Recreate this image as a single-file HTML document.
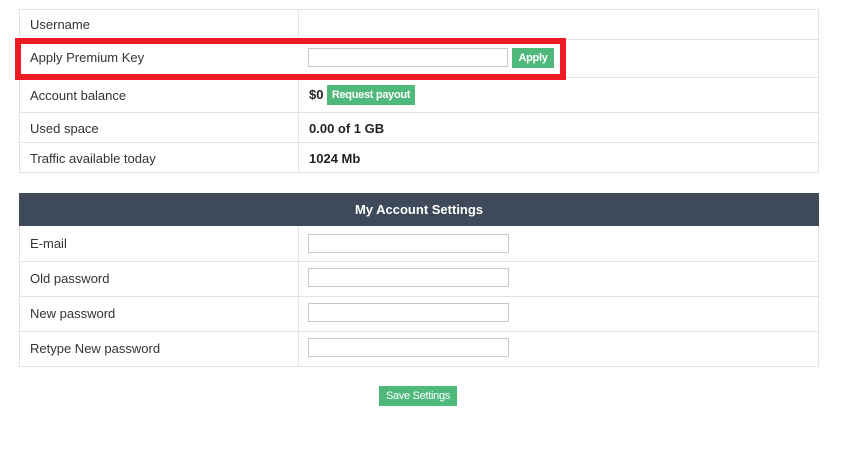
<!DOCTYPE html>
<html><head><style>
body{margin:0;width:853px;height:470px;background:#fff;font-family:"Liberation Sans",Arial,sans-serif;font-size:13px;color:#333;position:relative;overflow:hidden}
.a{position:absolute}
.h{background:#e3e3e3;height:1px}
.v{background:#e3e3e3;width:1px}
.t{position:absolute;left:30px}
.in{position:absolute;left:308px;width:199px;height:17px;border:1px solid #c8c8c8;background:#fff}
.btn{position:absolute;background:#4fb97c;color:#fff;font-size:11px;font-weight:bold;text-align:center;letter-spacing:-0.3px}
b{font-weight:bold;color:#222}
</style></head><body>
<!-- table 1 -->
<div class="a h" style="left:19px;top:9px;width:800px"></div>
<div class="a h" style="left:19px;top:39px;width:800px"></div>
<div class="a h" style="left:19px;top:77px;width:800px"></div>
<div class="a h" style="left:19px;top:112px;width:800px"></div>
<div class="a h" style="left:19px;top:142px;width:800px"></div>
<div class="a h" style="left:19px;top:172px;width:800px"></div>
<div class="a v" style="left:19px;top:9px;height:164px"></div>
<div class="a v" style="left:298px;top:9px;height:164px"></div>
<div class="a v" style="left:818px;top:9px;height:164px"></div>
<div class="t" style="top:17px">Username</div>
<div class="a" style="left:15px;top:38px;width:539px;height:30px;border:6px solid #ed1c24;background:#fff"></div>
<div class="t" style="top:50px">Apply Premium Key</div>
<div class="in" style="top:48px;width:198px"></div>
<div class="btn" style="left:512px;top:48px;width:42px;height:20px;line-height:20px">Apply</div>
<div class="t" style="top:88px">Account balance</div>
<div class="a" style="left:309px;top:87px"><b>$0</b></div>
<div class="btn" style="left:327px;top:85px;width:88px;height:20px;line-height:20px">Request payout</div>
<div class="t" style="top:121px">Used space</div>
<div class="a" style="left:309px;top:121px"><b>0.00 of 1 GB</b></div>
<div class="t" style="top:151px">Traffic available today</div>
<div class="a" style="left:309px;top:151px"><b>1024 Mb</b></div>
<!-- table 2 -->
<div class="a" style="left:19px;top:193px;width:800px;height:33px;background:#3e4959;color:#fff;font-weight:bold;text-align:center;line-height:33px;font-size:13px">My Account Settings</div>
<div class="a h" style="left:19px;top:261px;width:800px"></div>
<div class="a h" style="left:19px;top:296px;width:800px"></div>
<div class="a h" style="left:19px;top:331px;width:800px"></div>
<div class="a h" style="left:19px;top:366px;width:800px"></div>
<div class="a v" style="left:19px;top:226px;height:141px"></div>
<div class="a v" style="left:298px;top:226px;height:141px"></div>
<div class="a v" style="left:818px;top:226px;height:141px"></div>
<div class="t" style="top:236px">E-mail</div>
<div class="in" style="top:234px"></div>
<div class="t" style="top:271px">Old password</div>
<div class="in" style="top:268px"></div>
<div class="t" style="top:306px">New password</div>
<div class="in" style="top:303px"></div>
<div class="t" style="top:341px">Retype New password</div>
<div class="in" style="top:338px"></div>
<div class="btn" style="left:379px;top:386px;width:78px;height:20px;line-height:20px;font-weight:normal">Save Settings</div>
</body></html>
